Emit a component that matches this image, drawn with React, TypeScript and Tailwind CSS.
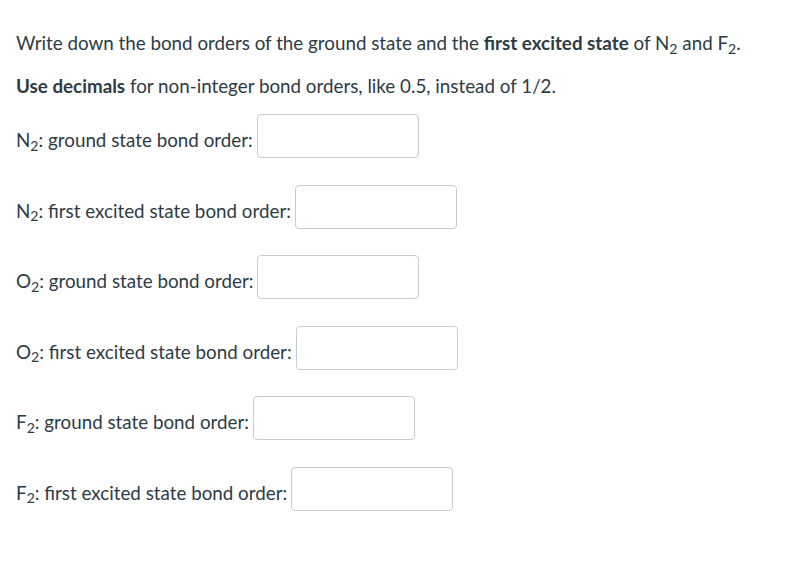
import React from 'react';

const rows = [
  { el: 'N', label: 'ground state bond order:' },
  { el: 'N', label: 'first excited state bond order:' },
  { el: 'O', label: 'ground state bond order:' },
  { el: 'O', label: 'first excited state bond order:' },
  { el: 'F', label: 'ground state bond order:' },
  { el: 'F', label: 'first excited state bond order:' },
];

export default function App() {
  return (
    <div
      className="min-h-[568px] bg-white px-4 pt-[31px] text-[18.8px] leading-6 text-[#2d3b45]"
      style={{ fontFamily: 'Lato, "Open Sans", sans-serif' }}
    >
      <p>
        Write down the bond orders of the ground state and the{' '}
        <strong className="font-bold">first excited state</strong> of N<sub>2</sub> and F<sub>2</sub>.
      </p>
      <p className="mt-[19px]">
        <strong className="font-bold">Use decimals</strong> for non-integer bond orders, like 0.5, instead of 1/2.
      </p>

      <div className="mt-[16px] flex flex-col gap-[26.5px]">
        {rows.map((r, i) => (
          <div key={i} className="flex items-end">
            <span className="pb-[6px]">
              {r.el}
              <sub>2</sub>: {r.label}
            </span>
            <input
              type="text"
              className="ml-1 h-[44px] w-[162px] rounded-[4px] border border-[#c7cdd1] bg-white px-2 outline-none"
            />
          </div>
        ))}
      </div>
    </div>
  );
}
